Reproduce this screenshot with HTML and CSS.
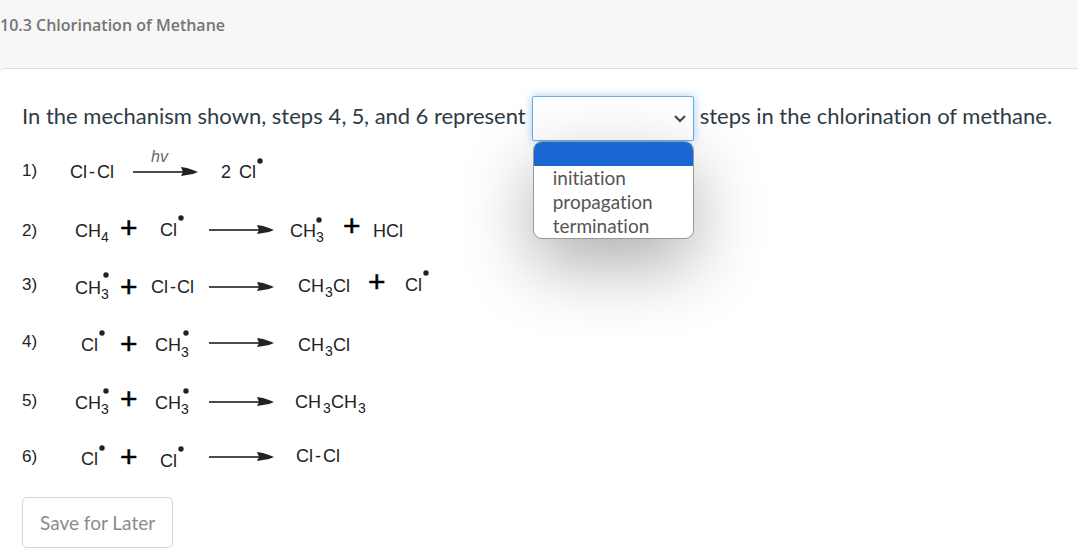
FILE: index.html
```html
<!DOCTYPE html>
<html lang="en">
<head>
<meta charset="utf-8">
<meta name="viewport" content="width=device-width, initial-scale=1">
<title>10.3 Chlorination of Methane</title>
<link rel="stylesheet" href="styles.css">
</head>
<body>
<header class="page-header">
  <h1 class="page-title">10.3 Chlorination of Methane</h1>
</header>
<main class="card">
  <div class="question">
    <label for="answer">In the mechanism shown, steps 4, 5, and 6 represent</label>
    <div class="dropdown">
      <select class="dropdown-control" id="answer">
        <option></option>
        <option>initiation</option>
        <option>propagation</option>
        <option>termination</option>
      </select>
      <svg class="dropdown-chevron" viewBox="0 0 14 10" aria-hidden="true"><path d="M2 2l5 5 5-5"/></svg>
      <ul class="menu" role="listbox" aria-label="Answer choices">
        <li class="menu-item is-active" role="option" aria-selected="true" aria-label="blank"></li>
        <li class="menu-item" role="option">initiation</li>
        <li class="menu-item" role="option">propagation</li>
        <li class="menu-item" role="option">termination</li>
      </ul>
    </div>
    <span>steps in the chlorination of methane.</span>
  </div>

  <svg class="mechanism" viewBox="0 0 420 330" role="img" aria-label="Six-step mechanism for the chlorination of methane">
    <defs>
      <g id="arrow">
        <path class="shaft" d="M0 0H60"/>
        <path d="M48 -5L54 -4L60 -2L65 0L60 2L54 3L48 4L50 0Z"/>
      </g>
      <circle id="dot" r="2.7"/>
    </defs>

    <!-- Step 1 -->
    <text class="num" x="0" y="31">1)</text>
    <text x="48" y="33">Cl<tspan x="67">-</tspan><tspan x="75">Cl</tspan></text>
    <text class="light" x="129" y="17">hv</text>
    <use href="#arrow" x="111" y="27"/>
    <text x="199" y="33">2<tspan x="217">Cl</tspan></text>
    <use href="#dot" x="238" y="16"/>

    <!-- Step 2 -->
    <text class="num" x="0" y="91">2)</text>
    <text x="53" y="92">CH</text><text class="sub" x="79" y="97">4</text>
    <text class="plus" x="98" y="93">+</text>
    <text x="138" y="91">Cl</text><use href="#dot" x="159" y="73"/>
    <use href="#arrow" x="187" y="85"/>
    <text x="268" y="92">CH</text><text class="sub" x="294" y="97">3</text><use href="#dot" x="297" y="75"/>
    <text class="plus" x="321" y="91">+</text>
    <text x="351" y="92">HCl</text>

    <!-- Step 3 -->
    <text class="num" x="0" y="145">3)</text>
    <text x="53" y="149">CH</text><text class="sub" x="79" y="154">3</text><use href="#dot" x="84" y="130"/>
    <text class="plus" x="98" y="152">+</text>
    <text x="129" y="148">Cl<tspan x="148">-</tspan><tspan x="155">Cl</tspan></text>
    <use href="#arrow" x="187" y="142"/>
    <text x="276" y="147">CH<tspan x="311">Cl</tspan></text><text class="sub" x="303" y="152">3</text>
    <text class="plus" x="346" y="147">+</text>
    <text x="383" y="146">Cl</text><use href="#dot" x="404" y="128"/>

    <!-- Step 4 -->
    <text class="num" x="0" y="202">4)</text>
    <text x="59" y="206">Cl</text><use href="#dot" x="80" y="188"/>
    <text class="plus" x="98" y="209">+</text>
    <text x="133" y="206">CH</text><text class="sub" x="159" y="212">3</text><use href="#dot" x="164" y="188"/>
    <use href="#arrow" x="187" y="198"/>
    <text x="276" y="206">CH<tspan x="311">Cl</tspan></text><text class="sub" x="303" y="211">3</text>

    <!-- Step 5 -->
    <text class="num" x="0" y="261">5)</text>
    <text x="53" y="264">CH</text><text class="sub" x="79" y="269">3</text><use href="#dot" x="84" y="246"/>
    <text class="plus" x="98" y="264">+</text>
    <text x="133" y="264">CH</text><text class="sub" x="159" y="269">3</text><use href="#dot" x="164" y="246"/>
    <use href="#arrow" x="187" y="257"/>
    <text x="273" y="263">CH<tspan x="309">CH</tspan></text><text class="sub" x="301" y="268">3</text><text class="sub" x="336" y="268">3</text>

    <!-- Step 6 -->
    <text class="num" x="0" y="317">6)</text>
    <text x="59" y="320">Cl</text><use href="#dot" x="80" y="303"/>
    <text class="plus" x="98" y="322">+</text>
    <text x="138" y="322">Cl</text><use href="#dot" x="159" y="304"/>
    <use href="#arrow" x="187" y="312"/>
    <text x="274" y="317">Cl<tspan x="293">-</tspan><tspan x="301">Cl</tspan></text>
  </svg>

  <button class="save-button" type="button">Save for Later</button>
</main>
</body>
</html>
```
FILE: styles.css
```css
* {
  box-sizing: border-box;
}

body {
  margin: 0;
  background: #f7f7f7;
  color: #2d3b45;
  font-family: Lato, "Liberation Sans", sans-serif;
  font-variant-ligatures: none;
  font-variant-numeric: proportional-nums;
}

.page-header {
  padding: 13px 0 31px;
}

.page-title {
  margin: 0;
  color: #757575;
  font: 600 16px/24px "Open Sans", "Noto Sans", sans-serif;
}

.card {
  min-height: calc(100vh - 68px);
  padding: 27px 22px 7px;
  background: #fff;
  border-top: 1px solid #dcdcdc;
  border-top-left-radius: 6px;
}

.question {
  display: flex;
  flex-wrap: wrap;
  gap: 6px;
  font-size: 22px;
  line-height: 40px;
}

.dropdown {
  position: relative;
  width: 162px;
}

.dropdown-control {
  display: block;
  width: 100%;
  height: 45px;
  padding: 0 16px;
  appearance: none;
  background: #fff;
  border: 1px solid #66afe9;
  border-radius: 2px;
  box-shadow: 0 0 10px rgba(102, 175, 233, 0.6);
  font: inherit;
}

.dropdown-chevron {
  position: absolute;
  top: 18px;
  right: 7px;
  width: 14px;
  height: 10px;
  fill: none;
  stroke: #444;
  stroke-width: 2;
  pointer-events: none;
}

.menu {
  position: absolute;
  top: 100%;
  left: 1px;
  right: 0;
  z-index: 1;
  margin: 0;
  padding: 0;
  overflow: hidden;
  list-style: none;
  background: #fff;
  border: 1px solid #999;
  border-radius: 9px;
  box-shadow: 0 26px 70px rgba(0, 0, 0, 0.32);
  color: #555;
  font-size: 19px;
  line-height: 24px;
}

.menu-item {
  height: 24px;
  padding: 0 19px;
}

.menu-item.is-active {
  background: #1967d2;
}

.mechanism {
  display: block;
  width: 420px;
  max-width: 100%;
  margin-top: 4px;
  fill: #222;
  font-family: "Liberation Sans", Arial, sans-serif;
  font-size: 18px;
}

.mechanism .num {
  font-size: 17px;
}

.mechanism .sub {
  font-size: 14px;
}

.mechanism .plus {
  fill: #000;
  stroke: #000;
  stroke-width: 0.5;
  font-size: 30px;
}

.mechanism .light {
  fill: #666;
  font-size: 16px;
  font-style: italic;
}

.mechanism .shaft {
  stroke: #111;
  stroke-width: 1.5;
}

.save-button {
  display: block;
  margin-top: 22px;
  padding: 12px 17px;
  background: #fff;
  border: 1px solid #d6d6d6;
  border-radius: 5px;
  color: #8b8b8b;
  font: 19px/25px Lato, sans-serif;
}
```
